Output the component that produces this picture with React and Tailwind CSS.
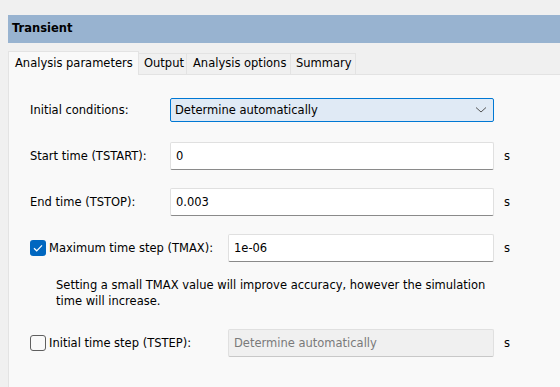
import React from "react";

function Check({ checked }) {
  return checked ? (
    <div className="w-[16px] h-[16px] rounded-[3px] bg-[#0067c0] flex items-center justify-center shrink-0">
      <svg width="10" height="8" viewBox="0 0 10 8" fill="none">
        <path d="M1 4.2 L3.7 6.8 L9 1.3" stroke="white" strokeWidth="1.2" />
      </svg>
    </div>
  ) : (
    <div className="w-[16px] h-[16px] rounded-[3px] border border-[#5f5f5f] bg-[#f9f9f9] shrink-0" />
  );
}

function Input({ value, disabled, className = "" }) {
  return (
    <div
      className={
        "h-[28px] flex items-center px-[5px] pt-px border border-[#e0e0e0] border-b-[#8a8a8a] rounded-[2px] " +
        (disabled ? "bg-[#f0f0f0] text-[#7a7a7a] border-[#c8c8c8] border-b-[#c8c8c8]" : "bg-white text-black") +
        " " +
        className
      }
    >
      {value}
    </div>
  );
}

export default function App() {
  return (
    <div
      className="w-[560px] h-[387px] bg-[#f0f0f0] text-[11.5px] text-black overflow-hidden"
      style={{ fontFamily: '"DejaVu Sans", sans-serif' }}
    >
      <div className="h-[15px]" />
      <div className="ml-[8px] h-[28px] bg-[#98b3d0] flex items-center pl-[4px] font-bold text-[11.5px]">
        Transient
      </div>
      <div className="ml-[8px] h-[344px] flex flex-col">
        <div className="h-[31px] flex items-end pt-[8px]">
          <div className="h-[24px] w-[131px] bg-[#f9f9f9] border border-b-0 border-[#e3e3e3] flex items-center pl-[6px] relative z-10 -mb-px">
            Analysis parameters
          </div>
          <div className="h-[21px] w-[48px] border border-l-0 border-[#e3e3e3] border-b-0 flex items-center pl-[5px]">
            Output
          </div>
          <div className="h-[21px] w-[104px] border border-l-0 border-[#e3e3e3] border-b-0 flex items-center pl-[6px]">
            Analysis options
          </div>
          <div className="h-[21px] w-[65px] border border-l-0 border-[#e3e3e3] border-b-0 flex items-center pl-[5px]">
            Summary
          </div>
        </div>
        <div className="flex-1 bg-[#f9f9f9] border-t border-l border-[#e3e3e3] pl-[21px] pt-[23px]">
          <div className="flex items-center h-[24px]">
            <div className="w-[140px] pt-px">Initial conditions:</div>
            <div className="w-[324px] h-[24px] bg-[#e0eaf5] border border-[#0078d4] rounded-[2px] flex items-center px-[4px] justify-between">
              <span className="pt-px">Determine automatically</span>
              <svg width="12" height="8" viewBox="0 0 12 8" fill="none" className="mr-[2px]">
                <path d="M1 1.5 L6 6 L11 1.5" stroke="#555" strokeWidth="1" />
              </svg>
            </div>
          </div>
          <div className="flex items-center h-[28px] mt-[20px]">
            <div className="w-[140px] pt-px">Start time (TSTART):</div>
            <Input value="0" className="w-[324px]" />
            <div className="ml-[10px] pt-px">s</div>
          </div>
          <div className="flex items-center h-[28px] mt-[18px]">
            <div className="w-[140px] pt-px">End time (TSTOP):</div>
            <Input value="0.003" className="w-[324px]" />
            <div className="ml-[10px] pt-px">s</div>
          </div>
          <div className="flex items-center h-[28px] mt-[18px]">
            <div className="w-[198px] flex items-center gap-[3px]">
              <Check checked />
              <span className="pt-px">Maximum time step (TMAX):</span>
            </div>
            <Input value="1e-06" className="w-[266px]" />
            <div className="ml-[10px] pt-px">s</div>
          </div>
          <div className="pl-[26px] mt-[15px] leading-[16px]">
            Setting a small TMAX value will improve accuracy, however the simulation
            <br />
            time will increase.
          </div>
          <div className="flex items-center h-[28px] mt-[20px]">
            <div className="w-[198px] flex items-center gap-[3px]">
              <Check />
              <span className="pt-px">Initial time step (TSTEP):</span>
            </div>
            <Input value="Determine automatically" disabled className="w-[266px]" />
            <div className="ml-[10px] pt-px">s</div>
          </div>
        </div>
      </div>
    </div>
  );
}
